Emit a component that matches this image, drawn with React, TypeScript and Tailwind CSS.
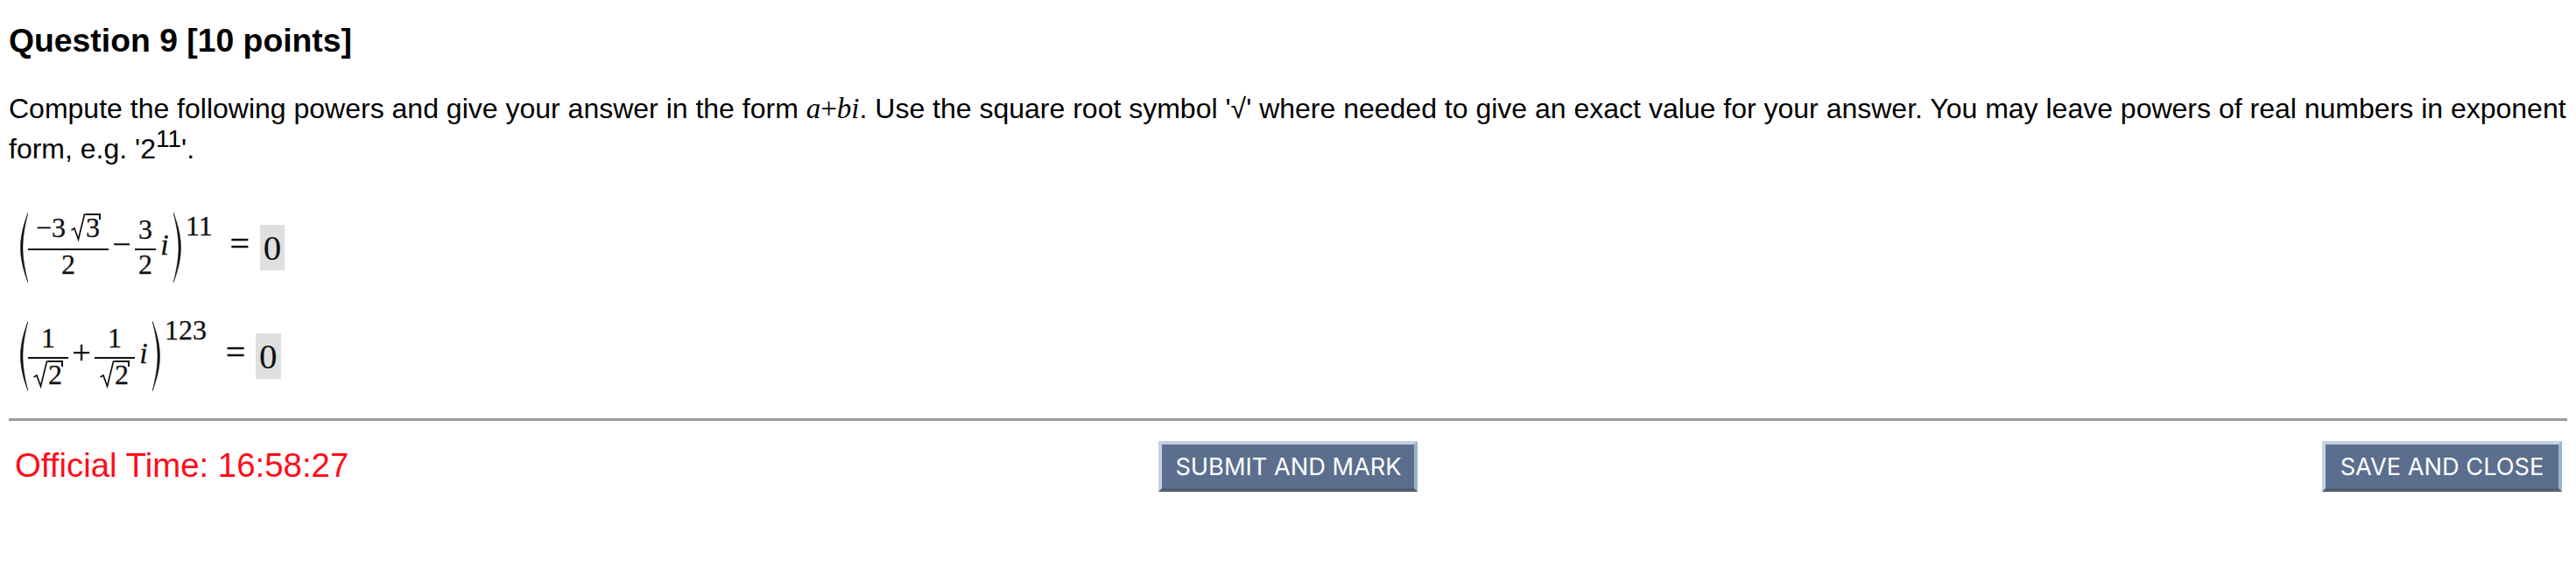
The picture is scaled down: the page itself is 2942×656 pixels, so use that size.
import type { ReactNode } from "react";

function Paren({ flip = false, h }: { flip?: boolean; h: number }) {
  return (
    <svg width="9" height={h} viewBox={`0 0 9 ${h}`} className={flip ? "shrink-0 -scale-x-100" : "shrink-0"}>
      <path
        d={`M9 0 C3 ${h * 0.2} 0.5 ${h * 0.35} 0.5 ${h * 0.5} C0.5 ${h * 0.65} 3 ${h * 0.8} 9 ${h} C5 ${h * 0.8} 3 ${h * 0.65} 3 ${h * 0.5} C3 ${h * 0.35} 5 ${h * 0.2} 9 0 Z`}
        fill="#111"
        stroke="#111"
        strokeWidth="0.5"
      />
    </svg>
  );
}

function Root({ children }: { children: ReactNode }) {
  return (
    <span className="inline-flex items-start">
      <svg width="17" height="32" viewBox="0 0 17 32" className="shrink-0">
        <path d="M0.5 19 L4 17 L8.5 29.5 L15.5 1 L17 1" fill="none" stroke="#111" strokeWidth="1.7" />
      </svg>
      <span className="relative border-t-2 border-[#111] leading-[28px] pr-px after:absolute after:right-0 after:-top-[2px] after:h-[7px] after:w-[2px] after:bg-[#111]">
        {children}
      </span>
    </span>
  );
}

function Frac({ top, bottom, w }: { top: ReactNode; bottom: ReactNode; w: string }) {
  return (
    <span className={`inline-flex flex-col items-center shrink-0 ${w}`}>
      <span className="h-[41px] pb-[8px] flex items-end justify-center leading-[28px]">{top}</span>
      <span className="w-full h-[2px] bg-[#111]" />
      <span className="h-[37px] flex items-start justify-center leading-[32px]">{bottom}</span>
    </span>
  );
}

function Answer() {
  return <span className="bg-[#dfdfdf] px-1 h-[52px] leading-[52px] text-[41px] text-[#111] [-webkit-text-stroke:0px]">0</span>;
}

export default function App() {
  return (
    <div className="w-[2942px] h-[656px] bg-white text-black font-['Liberation_Sans',Arial,sans-serif] overflow-hidden">
      <div className="pl-[10px]">
        <h2 className="pt-[25px] text-[37.33px] leading-[42px] font-bold">Question 9 [10 points]</h2>

        <p className="mt-[34px] text-[32px] leading-[46px]">
          Compute the following powers and give your answer in the form{" "}
          <span className="font-['Liberation_Serif',serif] text-[33px] leading-none">
            <span className="italic">a</span>+<span className="italic">bi</span>
          </span>
          . Use the square root symbol '√' where needed to give an exact value for your answer. You may leave powers of real numbers in exponent form, e.g. '2
          <sup className="text-[28px] leading-none top-[-13px]">11</sup>'.
        </p>

        <div className="font-['Liberation_Serif',serif] text-[32px] text-[#111] [-webkit-text-stroke:0.3px_#111]">
          <div className="mt-[50px] pl-[13px] h-[80px] flex items-center">
            <Paren h={80} />
            <Frac
              w="w-[92px]"
              top={
                <span className="flex items-start">
                  <span className="mt-[2px] mr-[6px]">−3</span>
                  <Root>3</Root>
                </span>
              }
              bottom="2"
            />
            <span className="w-[30px] pb-[8px] text-center shrink-0 text-[38px]">−</span>
            <Frac w="w-[24px]" top="3" bottom="2" />
            <span className="w-[20px] pb-[8px] text-center italic shrink-0 text-[34px]">i</span>
            <Paren flip h={80} />
            <span className="self-start ml-[5px] leading-[30px]">11</span>
            <span className="ml-[14px] mr-[6px] w-[34px] pb-[8px] text-center text-[40px]">=</span>
            <Answer />
          </div>

          <div className="mt-[44px] pl-[13px] h-[80px] flex items-center">
            <Paren h={80} />
            <Frac w="w-[46px]" top="1" bottom={<span className="pt-[2px]"><Root>2</Root></span>} />
            <span className="w-[30px] pb-[8px] text-center shrink-0 text-[38px]">+</span>
            <Frac w="w-[46px]" top="1" bottom={<span className="pt-[2px]"><Root>2</Root></span>} />
            <span className="w-[20px] pb-[8px] text-center italic shrink-0 text-[34px]">i</span>
            <Paren flip h={80} />
            <span className="self-start ml-[5px] -mt-[5px] leading-[30px]">123</span>
            <span className="ml-[16px] mr-[6px] w-[34px] pb-[8px] text-center text-[40px]">=</span>
            <Answer />
          </div>
        </div>

        <hr className="mt-[31px] mr-[10px] h-[3px] border-0 bg-[#9b9b9b]" />
      </div>

      <div className="mt-[23px] pl-[17px] pr-[16px] grid grid-cols-3 items-center">
        <span className="text-[38.4px] leading-[46px] -mt-[3px] text-[#ff0d1a] justify-self-start">Official Time: 16:58:27</span>
        <button className="justify-self-center h-[58px] w-[296px] pt-[2px] border-4 border-t-[#c3d2e0] border-l-[#c3d2e0] border-r-[#9bb3cb] border-b-[#525e6c] bg-[#5b6e8e] text-white text-[27.2px] font-['Inter',sans-serif]">
          SUBMIT AND MARK
        </button>
        <button className="justify-self-end h-[58px] w-[274px] pt-[2px] border-4 border-t-[#c3d2e0] border-l-[#c3d2e0] border-r-[#9bb3cb] border-b-[#525e6c] bg-[#5b6e8e] text-white text-[27.2px] font-['Inter',sans-serif]">
          SAVE AND CLOSE
        </button>
      </div>
    </div>
  );
}
